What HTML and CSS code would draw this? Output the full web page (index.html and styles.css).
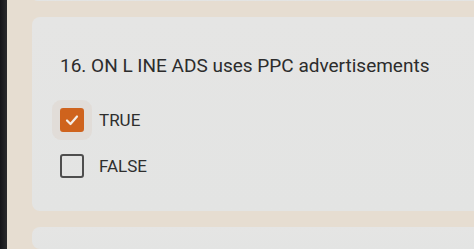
FILE: index.html
```html
<!DOCTYPE html>
<html>
<head>
<meta charset="utf-8">
<link rel="stylesheet" href="styles.css">
</head>
<body>
<div class="edge"></div>
<div class="page">
  <div class="card card-top"></div>
  <div class="card question">
    <div class="title">16. ON L INE ADS uses PPC advertisements</div>
    <div class="options">
      <div class="option">
        <span class="box checked">
          <svg width="16" height="16" viewBox="0 0 16 16"><path d="M3 8.5 L6.5 12 L13 4.5" fill="none" stroke="#f4ece6" stroke-width="2.2" stroke-linecap="round" stroke-linejoin="round"/></svg>
        </span>
        <span class="label">TRUE</span>
      </div>
      <div class="option">
        <span class="box"></span>
        <span class="label">FALSE</span>
      </div>
    </div>
  </div>
  <div class="card card-bottom"></div>
</div>
</body>
</html>
```
FILE: styles.css
```css
html, body {
  margin: 0;
  padding: 0;
  width: 474px;
  height: 249px;
  overflow: hidden;
}
body {
  display: flex;
  background: #e6ddd1;
  font-family: Roboto, "Liberation Sans", sans-serif;
}
.edge {
  width: 7px;
  flex: none;
  background: linear-gradient(90deg, #141418, #2a2a2c);
}
.page {
  flex: 1;
  display: flex;
  flex-direction: column;
  gap: 16px;
  padding-left: 25px;
  margin-top: -10px;
}
.card {
  background: linear-gradient(180deg, #e5e5e4, #e3e4e3);
  border-radius: 8px 0 0 8px;
}
.card-top {
  height: 15px;
}
.question {
  height: 194px;
  flex: none;
  padding: 37px 0 0 28px;
  box-sizing: border-box;
}
.card-bottom {
  height: 30px;
}
.title {
  font-size: 19px;
  color: #2c2c2c;
  line-height: 24px;
}
.options {
  margin-top: 30px;
  display: flex;
  flex-direction: column;
  gap: 22px;
}
.option {
  display: flex;
  align-items: center;
  gap: 15px;
  height: 24px;
}
.box {
  width: 24px;
  height: 24px;
  box-sizing: border-box;
  border: 2px solid #4e4e4e;
  border-radius: 3px;
  display: flex;
  align-items: center;
  justify-content: center;
}
.box.checked {
  background: #cf631d;
  border-color: #cf631d;
  box-shadow: 0 0 0 8px rgba(214, 175, 150, 0.14);
}
.label {
  font-size: 17px;
  color: #2e2e2e;
}
```
